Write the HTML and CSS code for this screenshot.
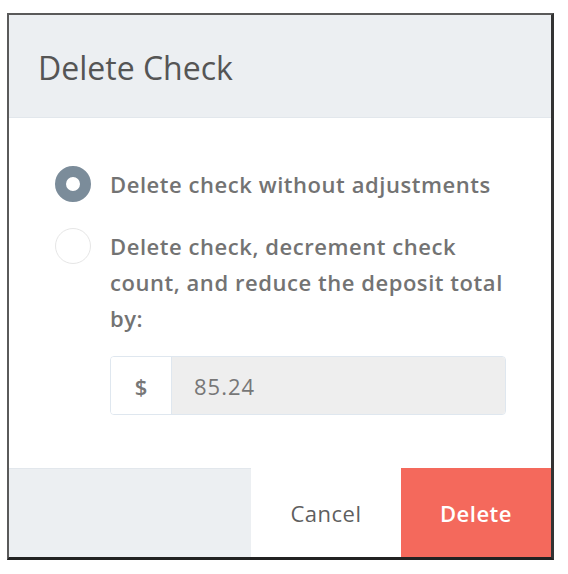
FILE: index.html
```html
<!DOCTYPE html>
<html lang="en">
<head>
  <meta charset="UTF-8" />
  <meta name="viewport" content="width=device-width, initial-scale=1" />
  <title>Delete Check</title>
  <link rel="stylesheet" href="styles.css">
</head>
<body>
  <div class="dialog">
    <div class="dialog-header">
      <h1>Delete Check</h1>
    </div>

    <div class="dialog-body">
      <label class="option">
        <span class="radio checked"></span>
        <span class="option-text">Delete check without adjustments</span>
      </label>
      <label class="option">
        <span class="radio"></span>
        <span class="option-text">Delete check, decrement check count, and reduce the deposit total by:</span>
      </label>

      <div class="amount">
        <span class="amount-prefix">$</span>
        <span class="amount-value">85.24</span>
      </div>
    </div>

    <div class="dialog-footer">
      <div class="footer-space"></div>
      <button class="btn-cancel">Cancel</button>
      <button class="btn-delete">Delete</button>
    </div>
  </div>
</body>
</html>
```

FILE: styles.css
```css
body {
  margin: 0;
  background: #fff;
  font-family: "Open Sans", "Liberation Sans", sans-serif;
}
.dialog {
  margin: 13px 0 0 7px;
  width: 542px;
  border: 2px solid #5a5a5a;
  border-bottom: 3px solid #222;
  border-right: 3px solid #333;
  background: #fff;
}
.dialog-header {
  height: 102px;
  display: flex;
  align-items: center;
  padding-left: 29px;
  background: #eceff2;
  border-bottom: 1px solid #e2e7ec;
}
.dialog-header h1 {
  margin: 3px 0 0;
  font-size: 32px;
  font-weight: 400;
  color: #555;
}
.dialog-body {
  padding: 48px 38px 53px 46px;
}
.option {
  display: flex;
  align-items: flex-start;
  gap: 19px;
  margin-bottom: 26px;
  font-size: 22px;
  letter-spacing: 0.55px;
  line-height: 36px;
  color: #737373;
  font-weight: 600;
}
.option:last-of-type {
  margin-bottom: 0;
}
.radio {
  flex: none;
  width: 36px;
  height: 36px;
  box-sizing: border-box;
  border-radius: 50%;
  border: 1px solid #e6e6e6;
  background: #fff;
}
.radio.checked {
  border: 11px solid #7b8c9a;
}
.amount {
  display: flex;
  margin: 20px 7px 0 55px;
  height: 57px;
  border: 1px solid #dfe7ef;
  border-radius: 4px;
  overflow: hidden;
  font-size: 22px;
  color: #777;
}
.amount-prefix {
  width: 60px;
  display: flex;
  align-items: center;
  justify-content: center;
  background: #fff;
  border-right: 1px solid #dfe7ef;
  font-weight: 600;
}
.amount-value {
  flex: 1;
  display: flex;
  align-items: center;
  padding-left: 22px;
  letter-spacing: 1px;
  background: #eeeeee;
}
.dialog-footer {
  display: flex;
  height: 89px;
}
.footer-space {
  flex: 1;
  background: #eceff2;
  border-top: 1px solid #e2e7ec;
}
.dialog-footer button {
  width: 150px;
  border: none;
  font-family: inherit;
  font-size: 22px;
  letter-spacing: 0.5px;
  cursor: pointer;
}
.btn-cancel {
  background: #fff;
  color: #5f5f5f;
}
.btn-delete {
  background: #f4695c;
  color: #fff;
  font-weight: 600;
}
```
